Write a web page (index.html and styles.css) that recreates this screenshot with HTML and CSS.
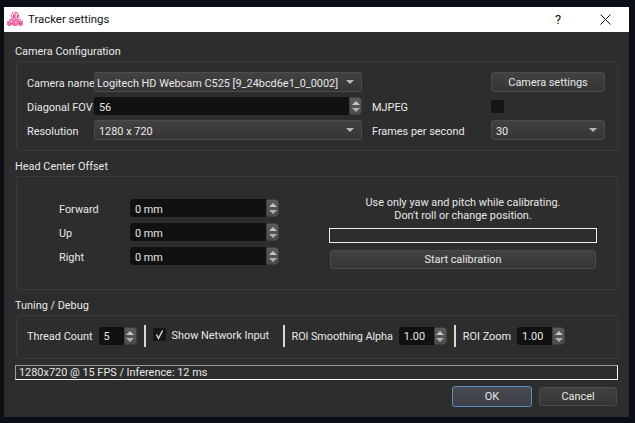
FILE: index.html
```html
<!DOCTYPE html>
<html lang="en">

<head>
    <meta charset="UTF-8">
    <title>Tracker settings</title>
    <link rel="stylesheet" href="styles.css">
</head>

<body>
    <div class="window">
        <div class="titlebar">
            <svg class="app-icon" viewBox="0 0 16 16" width="16" height="16">
                <circle cx="8" cy="5" r="4.5" fill="#f48ab9" />
                <rect x="2" y="8" width="12" height="4" fill="#f57fb3" />
                <rect x="0" y="10" width="16" height="4" fill="#f06fa8" />
                <rect x="1" y="14" width="3" height="1" fill="#f06fa8" />
                <rect x="6" y="14" width="4" height="1" fill="#f06fa8" />
                <rect x="12" y="14" width="3" height="1" fill="#f06fa8" />
                <rect x="6" y="1" width="2" height="1" fill="#fde0ec" />
                <rect x="5" y="3" width="2" height="3" fill="#fff" />
                <rect x="9" y="3" width="2" height="3" fill="#fff" />
                <rect x="6" y="4" width="1" height="2" fill="#6b2a4c" />
                <rect x="10" y="4" width="1" height="2" fill="#6b2a4c" />
                <rect x="3" y="10" width="2" height="1" fill="#fde0ec" />
                <rect x="8" y="11" width="2" height="1" fill="#fde0ec" />
                <rect x="12" y="9" width="1" height="1" fill="#fde0ec" />
                <rect x="12" y="12" width="2" height="1" fill="#c94a85" />
                <rect x="5" y="12" width="1" height="1" fill="#c94a85" />
            </svg>
            <span class="title">Tracker settings</span>
            <span class="help">?</span>
            <svg class="close" viewBox="0 0 11 11" width="11" height="11">
                <path d="M0.5 0.5L10.5 10.5M10.5 0.5L0.5 10.5" stroke="#111" stroke-width="1" fill="none" />
            </svg>
        </div>

        <div class="content">
            <div class="group-title">Camera Configuration</div>
            <div class="group camera-grid">
                <label>Camera name</label>
                <div class="combo">Logitech HD Webcam C525 [9_24bcd6e1_0_0002]<i class="arrow"></i></div>
                <span></span>
                <div class="btn">Camera settings</div>

                <label>Diagonal FOV</label>
                <div class="spin fov"><span class="value">56</span><span class="spin-btn"></span></div>
                <label class="side">MJPEG</label>
                <div class="check"></div>

                <label>Resolution</label>
                <div class="combo res">1280 x 720<i class="arrow"></i></div>
                <label class="side">Frames per second</label>
                <div class="combo res">30<i class="arrow"></i></div>
            </div>

            <div class="group-title">Head Center Offset</div>
            <div class="group head">
                <div class="offsets">
                    <label>Forward</label>
                    <div class="spin"><span class="value">0 mm</span><span class="spin-btn"></span></div>
                    <label>Up</label>
                    <div class="spin"><span class="value">0 mm</span><span class="spin-btn"></span></div>
                    <label>Right</label>
                    <div class="spin"><span class="value">0 mm</span><span class="spin-btn"></span></div>
                </div>
                <div class="calibrate">
                    <p class="hint">Use only yaw and pitch while calibrating.<br>Don't roll or change position.</p>
                    <div class="progress"></div>
                    <div class="btn start">Start calibration</div>
                </div>
            </div>

            <div class="group-title">Tuning / Debug</div>
            <div class="group tuning">
                <label>Thread Count</label>
                <div class="spin small threads"><span class="value">5</span><span class="spin-btn"></span></div>
                <div class="sep"></div>
                <div class="check checked">
                    <svg viewBox="0 0 13 13" width="13" height="13">
                        <path d="M3.5 6.5L5.5 10.5L9.5 2.5" stroke="#d8d8d8" stroke-width="1.4" fill="none" />
                    </svg>
                </div>
                <label class="net">Show Network Input</label>
                <div class="sep"></div>
                <label class="roi">ROI Smoothing Alpha</label>
                <div class="spin small"><span class="value">1.00</span><span class="spin-btn"></span></div>
                <div class="sep"></div>
                <label>ROI Zoom</label>
                <div class="spin small"><span class="value">1.00</span><span class="spin-btn"></span></div>
            </div>

            <div class="status">1280x720 @ 15 FPS / Inference: 12 ms</div>

            <div class="footer">
                <div class="btn ok">OK</div>
                <div class="btn cancel">Cancel</div>
            </div>
        </div>
    </div>
</body>

</html>
```
FILE: styles.css
```css
* {
    box-sizing: border-box;
}

body {
    margin: 0;
    width: 635px;
    height: 423px;
    overflow: hidden;
    padding: 7px 6px 6px 4px;
    background-color: #0b0e14;
    font-family: "Roboto", "Open Sans", sans-serif;
    font-size: 10.9px;
    color: #e8e8e8;
}

.window {
    height: 410px;
}

.titlebar {
    display: flex;
    align-items: center;
    height: 25px;
    padding-left: 3px;
    background-color: #fff;
    color: #111;
}

.app-icon {
    margin: 0 5px 1px 0;
}

.title {
    flex: 1;
    padding-bottom: 1px;
    font-size: 11.4px;
}

.help {
    width: 10px;
    margin-right: 35px;
    padding-bottom: 1px;
    font-size: 13px;
}

.close {
    margin-right: 18px;
}

.content {
    height: 385px;
    padding: 12px 0 0 11px;
    background-color: #2d2d2d;
}

.group-title {
    height: 14px;
    padding-top: 1px;
    line-height: 14px;
    margin-bottom: 3px;
}

.group {
    width: 602px;
    margin: 0 0 8px 1px;
    border: 1px solid #3a3a3a;
    border-radius: 3px;
}

label {
    padding-top: 2px;
    white-space: nowrap;
}

.camera-grid {
    display: grid;
    grid-template-columns: 67px 268px 129px 114px;
    grid-template-rows: 20px 18px 20px;
    row-gap: 5px;
    align-items: center;
    height: 90px;
    padding: 10px 0 0 10px;
}

.side {
    padding-left: 10px;
}

.combo,
.btn {
    display: flex;
    align-items: center;
    height: 20px;
    border: 1px solid #4c4c4c;
    border-radius: 3px;
    background: linear-gradient(#424242, #353535);
    white-space: nowrap;
}

.combo {
    padding: 2px 0 0 2px;
    justify-content: space-between;
}

.res {
    padding-left: 4px;
}

.arrow {
    width: 0;
    height: 0;
    margin: -2px 7px 0 0;
    border-left: 4px solid transparent;
    border-right: 4px solid transparent;
    border-top: 4px solid #b4b4b4;
}

.btn {
    justify-content: center;
}

.spin {
    display: flex;
    justify-content: space-between;
    height: 18px;
    border-radius: 3px;
    background-color: #111;
}

.value {
    padding: 2px 0 0 5px;
    line-height: 17px;
}

.spin-btn {
    display: flex;
    flex-direction: column;
    align-items: center;
    justify-content: center;
    gap: 3px;
    width: 13px;
    border: 1px solid #3f3f3f;
    border-radius: 0 3px 3px 0;
    background: linear-gradient(#5a5a5a, #4c4c4c);
}

.spin-btn::before,
.spin-btn::after {
    content: "";
    width: 0;
    height: 0;
    border-left: 4px solid transparent;
    border-right: 4px solid transparent;
}

.spin-btn::before {
    border-bottom: 4px solid #c4c4c4;
}

.spin-btn::after {
    border-top: 4px solid #b0b0b0;
}

.check {
    width: 13px;
    height: 13px;
    background-color: #161616;
}

.head {
    display: flex;
    align-items: center;
    height: 114px;
    padding: 0 0 2px 42px;
}

.offsets {
    display: grid;
    grid-template-columns: 71px 149px;
    grid-auto-rows: 18px;
    row-gap: 6px;
    align-items: center;
    margin-right: 50px;
}

.calibrate {
    display: flex;
    flex-direction: column;
    align-items: center;
    width: 268px;
}

.hint {
    margin: 0 0 6px;
    line-height: 13px;
    text-align: center;
}

.progress {
    width: 268px;
    height: 15px;
    border: 1px solid #eee;
}

.start {
    width: 266px;
    height: 19px;
    margin-top: 7px;
}

.tuning {
    display: flex;
    align-items: center;
    height: 44px;
    padding: 0 0 2px 10px;
}

.tuning label {
    padding-top: 1px;
}

.tuning .value {
    padding-top: 1px;
}

.small {
    width: 48px;
    margin-left: 6px;
}

.threads {
    width: 38px;
}

.sep {
    width: 2px;
    height: 22px;
    margin: 0 7px;
    background-color: #d8d8d8;
}

.checked {
    margin-bottom: 3px;
}

.net {
    margin: 0 0 3px 6px;
    width: 104px;
}

.roi {
    letter-spacing: -0.1px;
}

.status {
    width: 603px;
    height: 15px;
    line-height: 13px;
    padding-left: 3px;
    border: 1px solid #fff;
    border-top-color: #9a9a9a;
    border-left-color: #9a9a9a;
    margin-top: -2px;
}

.footer {
    display: flex;
    justify-content: flex-end;
    align-items: center;
    gap: 7px;
    width: 602px;
    margin-top: 6px;
}

.ok {
    width: 80px;
    height: 21px;
    border-color: #5c8fc4;
    background: linear-gradient(#474b52, #3b3e44);
}

.cancel {
    width: 78px;
    height: 19px;
}
```
